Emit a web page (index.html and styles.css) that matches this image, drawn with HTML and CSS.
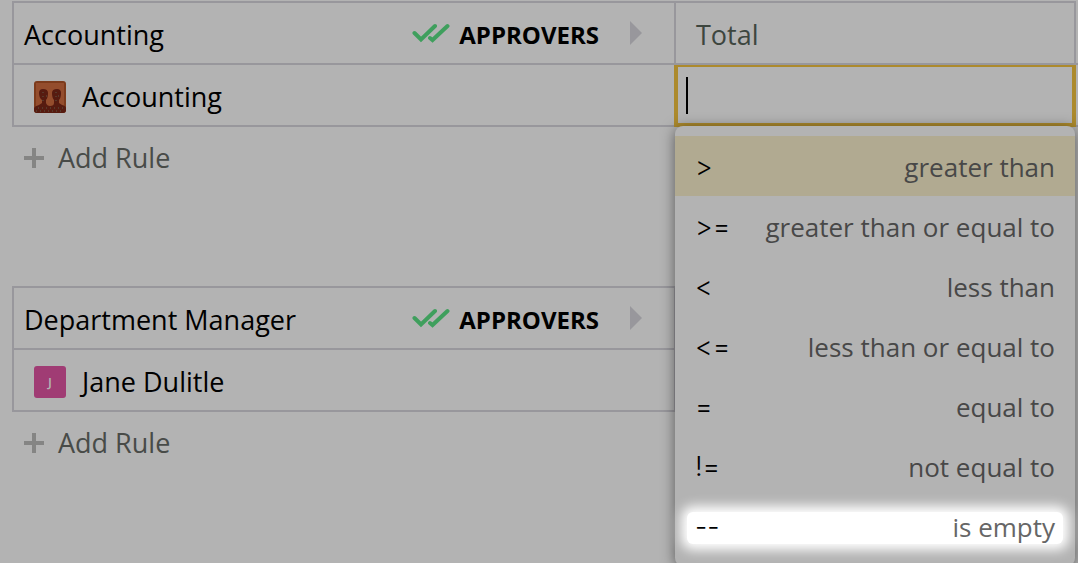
FILE: index.html
```html
<!DOCTYPE html>
<html lang="en">
<head>
<meta charset="utf-8">
<title>Approval rules</title>
<link rel="stylesheet" href="styles.css">
</head>
<body>
<svg class="defs" aria-hidden="true">
  <symbol id="checks" viewBox="0 0 38 20">
    <path d="M2.500 10 9 16.500 23 3M18 15 20.500 17 35.500 3" fill="none" stroke="#3f9f5d" stroke-width="4" stroke-linecap="round" stroke-linejoin="miter"/>
  </symbol>
  <symbol id="plus" viewBox="0 0 20 20">
    <path d="M10 0V20M0 10H20" fill="none" stroke="#858584" stroke-width="4"/>
  </symbol>
  <symbol id="arrow" viewBox="0 0 12 24">
    <path d="M0 0 12 12 0 24Z" fill="#98979c"/>
  </symbol>
</svg>
<main class="page">
  <section class="step">
    <table class="rules">
      <thead>
        <tr>
          <th class="name-cell" scope="col">
            <div class="heading">
              <span class="title">Accounting</span>
              <button class="approvers" type="button"><svg class="checks"><use href="#checks"/></svg>APPROVERS<svg class="arrow"><use href="#arrow"/></svg></button>
            </div>
          </th>
          <th class="total-cell" scope="col"><label for="total">Total</label></th>
          <td class="edge-cell"></td>
        </tr>
      </thead>
      <tbody>
        <tr>
          <td class="name-cell">
            <div class="person">
              <svg class="avatar" viewBox="0 0 32 32">
                <rect width="32" height="32" rx="3" fill="#7d3b1c"/>
                <path d="M2 2H30V28H2Z" fill="#944d2d"/>
                <path d="M0 27Q1 25 5 24L8 22V19Q5 17 5 12Q5 8 9 8Q14 8 14 12Q14 17 12 19V22Q13 25 16 25Q20 25 20 22V19Q18 17 18 12Q18 8 23 8Q27 8 27 12Q27 17 25 19V22L28 24Q32 25 32 27V29Q32 32 29 32H3Q0 32 0 29Z" fill="#561b10"/>
                <path d="M9 11V23M12 15H13M22 11V23M24 15H25M4 27H29M2 30H28" stroke="#5a5946" stroke-width="1" stroke-dasharray="1 3" fill="none"/>
              </svg>
              <span>Accounting</span>
            </div>
          </td>
          <td class="total-cell editing">
            <div class="editor">
              <input class="field" id="total" type="text" autocomplete="off">
              <span class="caret"></span>
            </div>
            <ul class="menu">
              <li><button class="option active" type="button"><span class="sign">&gt;</span><span>greater than</span></button></li>
              <li><button class="option" type="button"><span class="sign">&gt;=</span><span>greater than or equal to</span></button></li>
              <li><button class="option" type="button"><span class="sign">&lt;</span><span>less than</span></button></li>
              <li><button class="option" type="button"><span class="sign">&lt;=</span><span>less than or equal to</span></button></li>
              <li><button class="option" type="button"><span class="sign">=</span><span>equal to</span></button></li>
              <li><button class="option" type="button"><span class="sign">!=</span><span>not equal to</span></button></li>
              <li><button class="option spotlight" type="button"><span class="sign">--</span><span>is empty</span></button></li>
            </ul>
          </td>
          <td class="edge-cell"></td>
        </tr>
      </tbody>
    </table>
    <button class="add" type="button"><svg class="plus"><use href="#plus"/></svg>Add Rule</button>
  </section>
  <section class="step">
    <table class="rules short">
      <thead>
        <tr>
          <th class="name-cell" scope="col">
            <div class="heading">
              <span class="title">Department Manager</span>
              <button class="approvers" type="button"><svg class="checks"><use href="#checks"/></svg>APPROVERS<svg class="arrow"><use href="#arrow"/></svg></button>
            </div>
          </th>
        </tr>
      </thead>
      <tbody>
        <tr>
          <td class="name-cell">
            <div class="person"><span class="avatar initial">J</span><span>Jane Dulitle</span></div>
          </td>
        </tr>
      </tbody>
    </table>
    <button class="add" type="button"><svg class="plus"><use href="#plus"/></svg>Add Rule</button>
  </section>
</main>
</body>
</html>
```
FILE: styles.css
```css
* { box-sizing: border-box; }
body {
  margin: 0;
  min-height: 100vh;
  overflow: hidden;
  background: #b3b3b3;
  color: #000;
  font: 27px/36px "Open Sans", "Noto Sans", sans-serif;
}
button, input { font: inherit; color: inherit; background: none; border: 0; padding: 0; margin: 0; }
.defs { display: none; }
.page { min-height: 100vh; padding: 1px 0 0 12px; display: flex; flex-direction: column; gap: 110px; }
.rules { width: 100%; table-layout: fixed; border-collapse: separate; border-spacing: 0; }
.rules.short { width: calc(100% - 402px); border-right: 2px solid #98979c; }
.rules th, .rules td {
  height: 62px;
  padding: 3px 0 0;
  font-weight: 400;
  text-align: left;
  border-bottom: 2px solid #98979c;
  border-left: 2px solid #98979c;
}
.rules th { height: 64px; border-top: 2px solid #98979c; }
.rules .total-cell { width: 400px; }
.rules .edge-cell { width: 4px; }
.rules th.total-cell { color: #3d463f; }
th.total-cell label { padding-left: 20px; }
.heading { display: flex; align-items: center; justify-content: space-between; padding: 0 32px 0 10px; }
.approvers { display: flex; align-items: center; font-size: 24px; line-height: 34px; font-weight: 700; }
.checks { width: 38px; height: 20px; margin: 0 9px 4px 0; }
.arrow { width: 12px; height: 24px; margin: 0 0 3px 31px; }
.person { display: flex; align-items: center; gap: 16px; padding-left: 20px; }
.avatar { width: 32px; height: 32px; flex: none; }
.initial {
  border-radius: 3px;
  background: #a03c74;
  color: #b3b3b3;
  font-size: 13px;
  font-weight: 600;
  line-height: 32px;
  text-align: center;
}
.add { display: flex; align-items: center; gap: 14px; margin: 13px 0 0 12px; color: #484b48; }
.plus { width: 20px; height: 20px; }
.rules .editing { position: relative; border: 0; vertical-align: top; }
.editor {
  position: absolute;
  inset: 0 -2px 0 0;
  display: flex;
  border: solid #ac8a2d;
  border-width: 2px 4px 4px;
}
.field { width: 100%; padding: 0 8px; outline: 0; caret-color: transparent; }
.caret { position: absolute; left: 8px; top: 10px; width: 2px; height: 37px; background: #000; }
.menu {
  position: absolute;
  z-index: 1;
  top: 61px;
  left: 1px;
  width: 100%;
  margin: 0;
  padding: 10px 0;
  list-style: none;
  border-radius: 8px;
  background: #b3b3b3;
  box-shadow: 0 2px 14px rgba(0, 0, 0, .5);
}
.option {
  position: relative;
  z-index: 0;
  display: flex;
  align-items: center;
  justify-content: space-between;
  width: 100%;
  height: 60px;
  padding: 2px 20px 0;
  font-size: 26px;
  color: #484848;
}
.sign { color: #000; font-family: Inter, "Open Sans", sans-serif; font-size: 27px; font-weight: 300; font-variant-ligatures: none; }
.active { background: #b1aa91; }
.spotlight { color: #666; }
.spotlight::before {
  content: "";
  position: absolute;
  z-index: -1;
  inset: 16px 12px 12px;
  border-radius: 6px;
  background: #fff;
  box-shadow: 0 0 12px 6px #fff;
}
```
